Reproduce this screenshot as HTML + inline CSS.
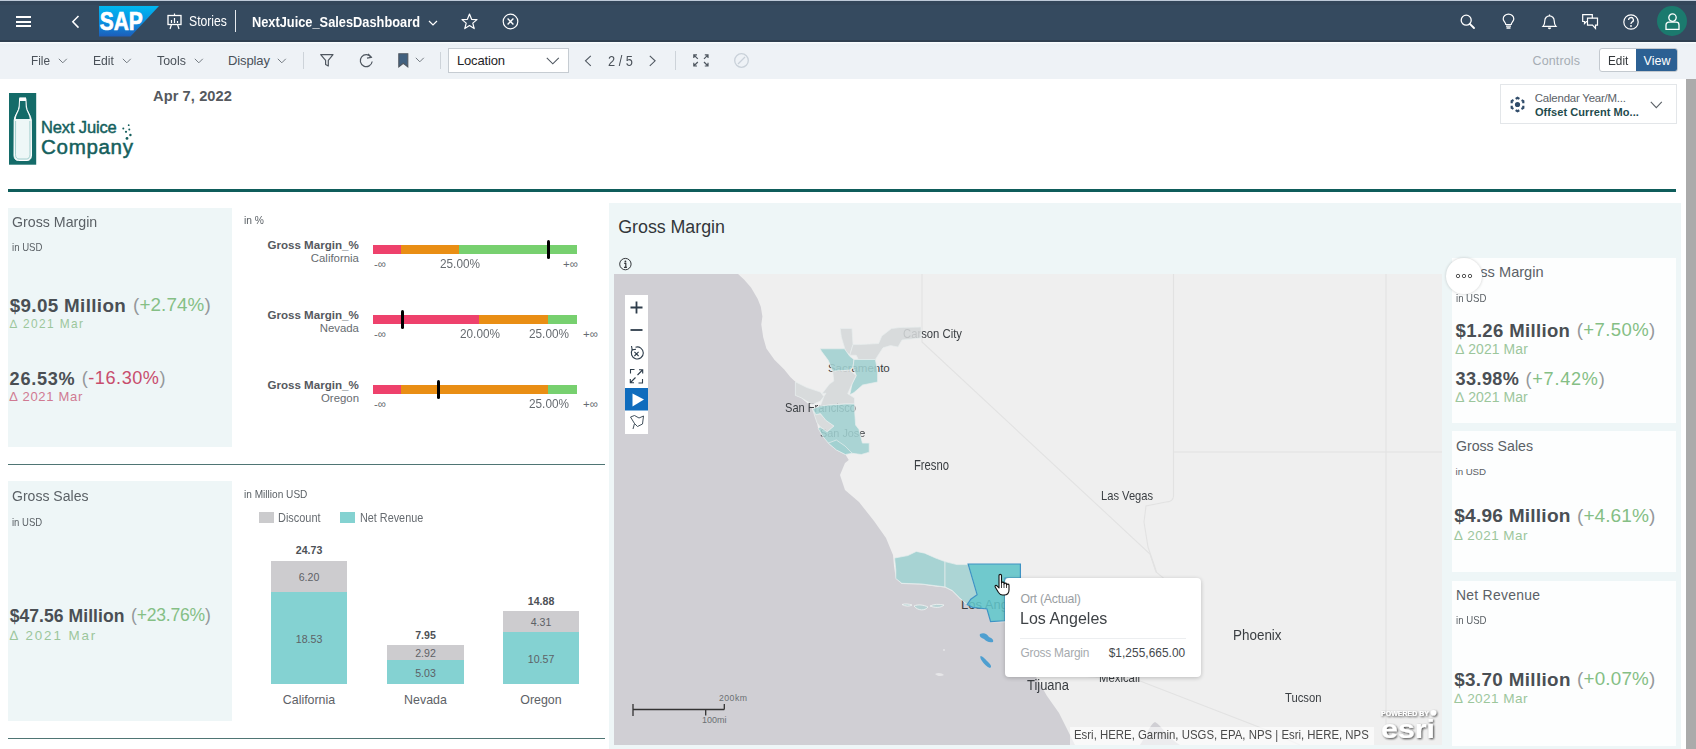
<!DOCTYPE html>
<html><head><meta charset="utf-8"><style>*{box-sizing:border-box;margin:0;padding:0}
html,body{width:1696px;height:749px;overflow:hidden;background:#fff;font-family:"Liberation Sans",sans-serif;color:#32363a}
.abs{position:absolute}
.tx{position:absolute;white-space:nowrap;line-height:1}
svg{position:absolute;overflow:visible}
</style></head><body>
<div class="abs" style="left:0;top:0;width:1696px;height:42px;background:#354a5f"></div><div class="abs" style="left:0;top:0;width:1696px;height:1px;background:#bdc9d8"></div><div class="abs" style="left:0;top:1px;width:1696px;height:4px;background:#33465a"></div><div class="abs" style="left:16px;top:16px;width:15px;height:2px;background:#fff"></div><div class="abs" style="left:16px;top:20.5px;width:15px;height:2px;background:#fff"></div><div class="abs" style="left:16px;top:25px;width:15px;height:2px;background:#fff"></div><svg style="left:71px;top:15px" width="10" height="14"><path d="M7.5 1 L1.8 6.8 L7.5 12.6" fill="none" stroke="#fff" stroke-width="1.5"/></svg><svg style="left:99px;top:6px" width="60" height="31"><defs><linearGradient id="sg" x1="0" y1="0" x2="0" y2="1"><stop offset="0" stop-color="#00b8f1"/><stop offset="0.55" stop-color="#0a8ee0"/><stop offset="1" stop-color="#1d5db9"/></linearGradient></defs><path d="M0 0 H60 L31.5 30.5 H0 Z" fill="url(#sg)"/><text x="0.8" y="24.2" font-family="Liberation Sans" font-weight="bold" font-size="26" fill="#fff" stroke="#fff" stroke-width="0.7" textLength="43" lengthAdjust="spacingAndGlyphs">SAP</text></svg><svg style="left:167px;top:13px" width="15" height="17"><rect x="1" y="2.5" width="13" height="9" fill="none" stroke="#fff" stroke-width="1.3"/><path d="M7.5 0.5 V2.5 M4.5 11.5 L3 16 M10.5 11.5 L12 16 M4.5 10 V7 M7.5 10 V5 M10.5 10 V8" stroke="#fff" stroke-width="1.2" fill="none"/></svg><div class="tx" style="left:189.0px;top:14.0px;font-size:14.49px;color:#fff;transform:scaleX(0.842);transform-origin:0 0;">Stories</div>
<div class="abs" style="left:235px;top:10px;width:1px;height:22px;background:#e6eaee"></div><div class="tx" style="left:252.0px;top:15.0px;font-size:14.49px;color:#fff;font-weight:bold;transform:scaleX(0.884);transform-origin:0 0;">NextJuice_SalesDashboard</div>
<svg style="left:428px;top:20px" width="10" height="7"><path d="M1 1 L5 5 L9 1" fill="none" stroke="#fff" stroke-width="1.2"/></svg><svg style="left:461px;top:13px" width="17" height="17"><path d="M8.5 1 L10.6 6.3 L16 6.6 L11.8 10.1 L13.2 15.6 L8.5 12.6 L3.8 15.6 L5.2 10.1 L1 6.6 L6.4 6.3 Z" fill="none" stroke="#fff" stroke-width="1.2" stroke-linejoin="round"/></svg><svg style="left:502px;top:13px" width="17" height="17"><circle cx="8.5" cy="8.5" r="7.3" fill="none" stroke="#fff" stroke-width="1.2"/><path d="M5.6 5.6 L11.4 11.4 M11.4 5.6 L5.6 11.4" stroke="#fff" stroke-width="1.4"/></svg><svg style="left:1460px;top:14px" width="16" height="16"><circle cx="6.2" cy="6.2" r="5" fill="none" stroke="#fff" stroke-width="1.3"/><path d="M9.8 9.8 L14 14" stroke="#fff" stroke-width="1.9" stroke-linecap="round"/></svg><svg style="left:1502px;top:14px" width="14" height="16"><path d="M3.8 10.5 C3.8 8.3 1.2 7.2 1.2 4.9 A5.3 4.8 0 0 1 11.8 4.9 C11.8 7.2 9.2 8.3 9.2 10.5 Z" fill="none" stroke="#fff" stroke-width="1.2"/><path d="M4 12.2 H9 M4.5 14 H8.5" stroke="#fff" stroke-width="1.3"/></svg><svg style="left:1542px;top:14px" width="15" height="16"><path d="M1 12.3 C2.5 10.8 2.8 9.5 2.8 6.8 A4.7 5 0 0 1 12.2 6.8 C12.2 9.5 12.5 10.8 14 12.3 Z" fill="none" stroke="#fff" stroke-width="1.2"/><path d="M5.8 13.5 A1.7 1.7 0 0 0 9.2 13.5 Z" fill="#fff"/><path d="M7.5 0.5 V2" stroke="#fff" stroke-width="1.2"/></svg><svg style="left:1582px;top:14px" width="17" height="16"><path d="M0.7 0.7 H10.3 V7.5 H4.5 L2.5 9.5 V7.5 H0.7 Z" fill="none" stroke="#fff" stroke-width="1.2"/><path d="M5.5 4.2 H15.5 V11.2 H13.5 V14.5 L10.5 11.2 H5.5 Z" fill="#354a5f" stroke="#fff" stroke-width="1.2"/></svg><svg style="left:1623px;top:14px" width="16" height="16"><circle cx="8" cy="8" r="7.2" fill="none" stroke="#fff" stroke-width="1.2"/><path d="M5.6 6 A2.4 2.4 0 1 1 8.8 8.2 C8.1 8.6 8 9 8 10" fill="none" stroke="#fff" stroke-width="1.3"/><circle cx="8" cy="12" r="0.9" fill="#fff"/></svg><div class="abs" style="left:1657px;top:6px;width:30px;height:30px;border-radius:50%;background:#1b7a6e"></div><svg style="left:1665px;top:13px" width="15" height="17"><circle cx="7.5" cy="4.6" r="3.7" fill="none" stroke="#fff" stroke-width="1.3"/><path d="M1 16.3 V12 A2.8 2.8 0 0 1 3.8 9.2 H11.2 A2.8 2.8 0 0 1 14 12 V16.3 Z" fill="none" stroke="#fff" stroke-width="1.3"/></svg><div class="abs" style="left:0;top:42px;width:1696px;height:37px;background:linear-gradient(#f8fbfc 0,#f8fbfc 1px,#ebf0f4 2px,#eef2f6 6px,#eef2f6)"></div><div class="abs" style="left:0;top:40px;width:1696px;height:2px;background:#2f3f4f"></div><div class="tx" style="left:31.0px;top:54.0px;font-size:13.04px;color:#4a5159;transform:scaleX(0.903);transform-origin:0 0;">File</div>
<div class="tx" style="left:93.0px;top:54.0px;font-size:13.04px;color:#4a5159;transform:scaleX(0.933);transform-origin:0 0;">Edit</div>
<div class="tx" style="left:157.0px;top:54.0px;font-size:13.04px;color:#4a5159;transform:scaleX(0.951);transform-origin:0 0;">Tools</div>
<div class="tx" style="left:228.0px;top:54.0px;font-size:13.04px;letter-spacing:-0.13px;color:#4a5159;">Display</div>
<svg style="left:58px;top:58px" width="10" height="6"><path d="M0.8 0.8 L4.8 4.8 L8.8 0.8" fill="none" stroke="#737a81" stroke-width="1"/></svg><svg style="left:122px;top:58px" width="10" height="6"><path d="M0.8 0.8 L4.8 4.8 L8.8 0.8" fill="none" stroke="#737a81" stroke-width="1"/></svg><svg style="left:194px;top:58px" width="10" height="6"><path d="M0.8 0.8 L4.8 4.8 L8.8 0.8" fill="none" stroke="#737a81" stroke-width="1"/></svg><svg style="left:277px;top:58px" width="10" height="6"><path d="M0.8 0.8 L4.8 4.8 L8.8 0.8" fill="none" stroke="#737a81" stroke-width="1"/></svg><div class="abs" style="left:303px;top:52px;width:1px;height:17px;background:#cdd3d9"></div><svg style="left:320px;top:54px" width="14" height="13"><path d="M0.7 0.7 H13 L8.3 6.3 V12 L5.6 10.4 V6.3 Z" fill="none" stroke="#4f5760" stroke-width="1.2" stroke-linejoin="round"/></svg><svg style="left:359px;top:53px" width="15" height="15"><path d="M12.2 4.2 A6 6 0 1 0 13.2 8.5" fill="none" stroke="#4f5760" stroke-width="1.2"/><path d="M9 0.8 L12.3 4.3 L8 5.2" fill="none" stroke="#4f5760" stroke-width="1.2"/></svg><svg style="left:398px;top:53px" width="11" height="15"><path d="M0.8 0.8 H9.8 V13.8 L5.3 10.3 L0.8 13.8 Z" fill="#41607f" stroke="#4f5760" stroke-width="1.1"/></svg><svg style="left:415px;top:57px" width="10" height="6"><path d="M0.8 0.8 L4.8 4.8 L8.8 0.8" fill="none" stroke="#737a81" stroke-width="1"/></svg><div class="abs" style="left:440px;top:52px;width:1px;height:17px;background:#cdd3d9"></div><div class="abs" style="left:448px;top:48px;width:121px;height:25px;background:#fff;border:1px solid #c6ccd2"></div><div class="tx" style="left:457.0px;top:54.0px;font-size:13.04px;letter-spacing:-0.19px;color:#1f2326;">Location</div>
<svg style="left:546px;top:57px" width="14" height="8"><path d="M0.8 0.8 L6.8 6.8 L12.8 0.8" fill="none" stroke="#4f5760" stroke-width="1.1"/></svg><svg style="left:584px;top:55px" width="8" height="12"><path d="M6.8 0.8 L1.5 5.8 L6.8 10.8" fill="none" stroke="#4f5760" stroke-width="1.1"/></svg><div class="tx" style="left:608.0px;top:54.0px;font-size:14.49px;color:#4a5159;transform:scaleX(0.887);transform-origin:0 0;">2 / 5</div>
<svg style="left:649px;top:55px" width="8" height="12"><path d="M0.8 0.8 L6.1 5.8 L0.8 10.8" fill="none" stroke="#4f5760" stroke-width="1.1"/></svg><div class="abs" style="left:675px;top:51px;width:1px;height:19px;background:#cdd3d9"></div><svg style="left:693px;top:54px" width="16" height="13"><path d="M0.8 4 V0.8 H4 M0.8 0.8 L4.8 4.8 M15 4 V0.8 H11.8 M15 0.8 L11 4.8 M0.8 8.8 V12 H4 M0.8 12 L4.8 8 M15 8.8 V12 H11.8 M15 12 L11 8" fill="none" stroke="#4f5760" stroke-width="1.2"/></svg><svg style="left:734px;top:53px" width="16" height="16"><circle cx="7.5" cy="7.5" r="6.8" fill="none" stroke="#c9d1d9" stroke-width="1.3"/><path d="M4 11 L11 4" stroke="#c9d1d9" stroke-width="1.3"/></svg><div class="tx" style="left:1532.5px;top:55.0px;font-size:12.46px;letter-spacing:0.15px;color:#a6adb4;">Controls</div>
<div class="abs" style="left:1599px;top:48px;width:79px;height:24px;border:1px solid #c3c9cf;border-radius:3px;background:#fff;overflow:hidden"><div class="abs" style="left:36px;top:-1px;width:43px;height:26px;background:#2c6093"></div></div><div class="tx" style="left:1607.7px;top:55.0px;font-size:12.46px;color:#32363a;transform:scaleX(0.944);transform-origin:0 0;">Edit</div>
<div class="tx" style="left:1643.5px;top:55.0px;font-size:12.46px;letter-spacing:0.07px;color:#fff;">View</div>
<div class="abs" style="left:1686px;top:79px;width:10px;height:670px;background:#ababab"></div><svg style="left:8.8px;top:92.9px" width="28" height="72"><rect x="0" y="0" width="27.2" height="71.7" fill="#146b69"/><path d="M10.6 5.5 L10.2 13 C10 18 5.5 22 5.2 27 L5 62 C5 66 7 67.5 9.5 67.5 L18 67.5 C20.5 67.5 22.5 66 22.5 62 L22.3 27 C22 22 17.5 18 17.3 13 L16.9 5.5 Z" fill="#eef7f7" stroke="#fff" stroke-width="1"/><path d="M11 8 L10.8 13.5 C10.5 18 7 21.5 6.8 26 L16 26 L20.7 26 C20.5 21.5 17 18 16.7 13.5 L16.5 8 Z" fill="#146b69"/><path d="M6.6 28 L6.5 61.5 C6.5 64.5 8 66 10 66 L17.5 66 C19.5 66 21 64.5 21 61.5 L20.9 28" fill="none" stroke="#6fb3b1" stroke-width="0.6"/><rect x="10.4" y="4.4" width="6.6" height="3.3" fill="#fff"/></svg><div class="tx" style="left:41.1px;top:120.0px;font-size:16.52px;letter-spacing:-0.17px;color:#155f5d;-webkit-text-stroke:0.45px #155f5d;">Next Juice</div>
<div class="tx" style="left:41.1px;top:137.0px;font-size:20.58px;letter-spacing:0.63px;color:#155f5d;-webkit-text-stroke:0.5px #155f5d;">Company</div>
<svg style="left:120px;top:122px" width="14" height="20"><circle cx="3.3" cy="6.5" r="1" fill="#155f5d"/><circle cx="8.7" cy="3.2" r="0.9" fill="#155f5d"/><circle cx="9.3" cy="7.6" r="1" fill="#155f5d"/><circle cx="6" cy="9.8" r="1.1" fill="#155f5d"/><circle cx="10.4" cy="13" r="1.2" fill="#155f5d"/><circle cx="7" cy="16.4" r="1.4" fill="#155f5d"/></svg><div class="tx" style="left:153.0px;top:89.0px;font-size:14.64px;letter-spacing:0.09px;color:#55595e;font-weight:bold;">Apr 7, 2022</div>
<div class="abs" style="left:1500px;top:84px;width:177px;height:40px;border:1px solid #e3e6e9;background:#fff"></div><svg style="left:1509px;top:96px" width="17" height="18"><polygon points="8.5,1.8 14.3,5.1 14.3,11.9 8.5,15.2 2.7,11.9 2.7,5.1" fill="none" stroke="#2f4b69" stroke-width="2.2" stroke-dasharray="4.2 2.5" stroke-dashoffset="2"/><circle cx="8.5" cy="8.5" r="2.6" fill="#2f4b69"/></svg><div class="tx" style="left:1534.8px;top:93.0px;font-size:11.45px;letter-spacing:-0.21px;color:#5b6167;">Calendar Year/M...</div>
<div class="tx" style="left:1535.0px;top:107.0px;font-size:11.01px;letter-spacing:0.06px;color:#1e4b4d;font-weight:bold;">Offset Current Mo...</div>
<svg style="left:1650px;top:101px" width="13" height="8"><path d="M0.8 0.8 L6.3 6.6 L11.8 0.8" fill="none" stroke="#5b6167" stroke-width="1.1"/></svg><div class="abs" style="left:8px;top:189px;width:1668px;height:3px;background:#0f5d5b"></div><div class="abs" style="left:8px;top:208px;width:224px;height:239px;background:#eef6f7"></div><div class="tx" style="left:11.7px;top:215.0px;font-size:14.78px;color:#5b6166;transform:scaleX(0.962);transform-origin:0 0;">Gross Margin</div>
<div class="tx" style="left:11.7px;top:243.0px;font-size:10.29px;color:#5b6166;transform:scaleX(0.935);transform-origin:0 0;">in USD</div>
<div class="tx" style="left:9.7px;top:297.0px;font-size:18.84px;letter-spacing:0.34px;color:#4a4f54;font-weight:bold;">$9.05 Million</div>
<div class="tx" style="left:133.0px;top:295.6px;font-size:18.84px;letter-spacing:0.11px;color:#94989b">(<span style="color:#85bf85">+2.74%</span>)</div>
<div class="tx" style="left:9.7px;top:319.0px;font-size:11.88px;letter-spacing:1.39px;color:#9cc69c;">∆ 2021 Mar</div>
<div class="tx" style="left:9.6px;top:370.0px;font-size:18.12px;letter-spacing:0.74px;color:#4a4f54;font-weight:bold;">26.53%</div>
<div class="tx" style="left:81.7px;top:369.3px;font-size:18.12px;letter-spacing:0.54px;color:#94989b">(<span style="color:#c84d6d">-16.30%</span>)</div>
<div class="tx" style="left:9.6px;top:390.0px;font-size:13.04px;letter-spacing:0.67px;color:#d07a92;">∆ 2021 Mar</div>
<div class="tx" style="left:244.0px;top:215.0px;font-size:11.59px;color:#5b6166;transform:scaleX(0.887);transform-origin:0 0;">in %</div>
<div class="tx" style="left:267.4px;top:239.0px;font-size:11.60px;color:#55595e;font-weight:bold;">Gross Margin_%</div>
<div class="tx" style="left:310.8px;top:253.0px;font-size:11.40px;color:#666b70;">California</div>
<div class="abs" style="left:373px;top:245px;width:28px;height:9px;background:#ee416c"></div><div class="abs" style="left:401px;top:245px;width:58px;height:9px;background:#e98e14"></div><div class="abs" style="left:459px;top:245px;width:118px;height:9px;background:#77d06f"></div><div class="abs" style="left:547.0px;top:240px;width:3px;height:19px;border-radius:1.5px;background:#000"></div><div class="tx" style="left:374.0px;top:259.0px;font-size:11.50px;color:#666b70;">-∞</div>
<div class="tx" style="left:440.0px;top:258.0px;font-size:12.32px;color:#666b70;transform:scaleX(0.957);transform-origin:0 0;">25.00%</div>
<div class="tx" style="left:563.0px;top:259.0px;font-size:11.50px;letter-spacing:0.05px;color:#666b70;">+∞</div>
<div class="tx" style="left:267.4px;top:309.0px;font-size:11.60px;color:#55595e;font-weight:bold;">Gross Margin_%</div>
<div class="tx" style="left:319.7px;top:323.0px;font-size:11.40px;color:#666b70;">Nevada</div>
<div class="abs" style="left:373px;top:315px;width:106px;height:9px;background:#ee416c"></div><div class="abs" style="left:479px;top:315px;width:69px;height:9px;background:#e98e14"></div><div class="abs" style="left:548px;top:315px;width:29px;height:9px;background:#77d06f"></div><div class="abs" style="left:401.0px;top:310px;width:3px;height:19px;border-radius:1.5px;background:#000"></div><div class="tx" style="left:374.0px;top:329.0px;font-size:11.50px;color:#666b70;">-∞</div>
<div class="tx" style="left:460.0px;top:328.0px;font-size:12.32px;color:#666b70;transform:scaleX(0.957);transform-origin:0 0;">20.00%</div>
<div class="tx" style="left:529.0px;top:328.0px;font-size:12.32px;color:#666b70;transform:scaleX(0.957);transform-origin:0 0;">25.00%</div>
<div class="tx" style="left:583.0px;top:329.0px;font-size:11.50px;letter-spacing:0.05px;color:#666b70;">+∞</div>
<div class="tx" style="left:267.4px;top:379.0px;font-size:11.60px;color:#55595e;font-weight:bold;">Gross Margin_%</div>
<div class="tx" style="left:321.0px;top:393.0px;font-size:11.40px;color:#666b70;">Oregon</div>
<div class="abs" style="left:373px;top:385px;width:28px;height:9px;background:#ee416c"></div><div class="abs" style="left:401px;top:385px;width:147px;height:9px;background:#e98e14"></div><div class="abs" style="left:548px;top:385px;width:29px;height:9px;background:#77d06f"></div><div class="abs" style="left:436.5px;top:380px;width:3px;height:19px;border-radius:1.5px;background:#000"></div><div class="tx" style="left:374.0px;top:399.0px;font-size:11.50px;color:#666b70;">-∞</div>
<div class="tx" style="left:529.0px;top:398.0px;font-size:12.32px;color:#666b70;transform:scaleX(0.957);transform-origin:0 0;">25.00%</div>
<div class="tx" style="left:583.0px;top:399.0px;font-size:11.50px;letter-spacing:0.05px;color:#666b70;">+∞</div>
<div class="abs" style="left:8px;top:464px;width:597px;height:1px;background:#4f7574"></div><div class="abs" style="left:8px;top:738px;width:597px;height:1px;background:#4f7574"></div><div class="abs" style="left:8px;top:481px;width:224px;height:240px;background:#eef6f7"></div><div class="tx" style="left:11.8px;top:489.0px;font-size:14.93px;color:#5b6166;transform:scaleX(0.941);transform-origin:0 0;">Gross Sales</div>
<div class="tx" style="left:11.8px;top:517.0px;font-size:11.30px;color:#5b6166;transform:scaleX(0.843);transform-origin:0 0;">in USD</div>
<div class="tx" style="left:9.7px;top:608.0px;font-size:17.54px;letter-spacing:0.06px;color:#4a4f54;font-weight:bold;">$47.56 Million</div>
<div class="tx" style="left:131.0px;top:606.7px;font-size:17.54px;letter-spacing:-0.20px;color:#94989b">(<span style="color:#85bf85">+23.76%</span>)</div>
<div class="tx" style="left:9.7px;top:629.0px;font-size:13.40px;letter-spacing:1.90px;color:#9cc69c;">∆ 2021 Mar</div>
<div class="tx" style="left:244.0px;top:489.0px;font-size:10.87px;color:#5b6166;transform:scaleX(0.930);transform-origin:0 0;">in Million USD</div>
<div class="abs" style="left:259px;top:512px;width:15px;height:11px;background:#cbcbcd"></div><div class="tx" style="left:278.4px;top:512.0px;font-size:12.03px;color:#666b70;transform:scaleX(0.910);transform-origin:0 0;">Discount</div>
<div class="abs" style="left:340px;top:512px;width:15px;height:11px;background:#84d2d1"></div><div class="tx" style="left:359.7px;top:512.0px;font-size:12.03px;color:#666b70;transform:scaleX(0.901);transform-origin:0 0;">Net Revenue</div>
<div class="abs" style="left:271px;top:560.7px;width:76px;height:31.299999999999955px;background:#cdcccf"></div><div class="abs" style="left:271px;top:592px;width:76px;height:91.5px;background:#84d2d2"></div><div class="tx" style="left:295.8px;top:545.0px;font-size:10.60px;color:#4d5156;font-weight:bold;">24.73</div>
<div class="tx" style="left:298.7px;top:572.0px;font-size:10.60px;color:#5d6166;">6.20</div>
<div class="tx" style="left:295.8px;top:634.0px;font-size:10.60px;color:#5d6166;">18.53</div>
<div class="tx" style="left:282.8px;top:694.0px;font-size:12.40px;color:#5d6166;">California</div>
<div class="abs" style="left:387px;top:645px;width:77px;height:15px;background:#cdcccf"></div><div class="abs" style="left:387px;top:660px;width:77px;height:23.5px;background:#84d2d2"></div><div class="tx" style="left:415.2px;top:630.0px;font-size:10.60px;color:#4d5156;font-weight:bold;">7.95</div>
<div class="tx" style="left:415.2px;top:648.0px;font-size:10.60px;color:#5d6166;">2.92</div>
<div class="tx" style="left:415.2px;top:668.0px;font-size:10.60px;color:#5d6166;">5.03</div>
<div class="tx" style="left:404.1px;top:694.0px;font-size:12.40px;color:#5d6166;">Nevada</div>
<div class="abs" style="left:503px;top:611px;width:76px;height:21px;background:#cdcccf"></div><div class="abs" style="left:503px;top:632px;width:76px;height:51.5px;background:#84d2d2"></div><div class="tx" style="left:527.8px;top:596.0px;font-size:10.60px;color:#4d5156;font-weight:bold;">14.88</div>
<div class="tx" style="left:530.7px;top:617.0px;font-size:10.60px;color:#5d6166;">4.31</div>
<div class="tx" style="left:527.8px;top:654.0px;font-size:10.60px;color:#5d6166;">10.57</div>
<div class="tx" style="left:520.3px;top:694.0px;font-size:12.40px;color:#5d6166;">Oregon</div>
<div class="abs" style="left:609px;top:203px;width:1072px;height:546px;background:#eef6f7"></div><div class="tx" style="left:618.3px;top:219.0px;font-size:17.83px;letter-spacing:-0.04px;color:#32363a;">Gross Margin</div>
<svg style="left:619px;top:258px" width="13" height="13"><circle cx="6.4" cy="6.1" r="5.7" fill="none" stroke="#32363a" stroke-width="1"/><circle cx="6.4" cy="3.5" r="0.9" fill="#32363a"/><path d="M5.2 5.3 H6.8 V9.2 M5 9.3 H7.9" fill="none" stroke="#32363a" stroke-width="1.2"/></svg><svg style="left:0;top:0" width="1696" height="749"><defs><clipPath id="mc"><rect x="614" y="274" width="828" height="471"/></clipPath></defs><g clip-path="url(#mc)"><rect x="614" y="274" width="828" height="471" fill="#efefef"/><path d="M614.0 273.0 L737.0 273.0 L744.0 279.6 L751.0 287.6 L757.6 298.8 L760.8 306.8 L762.4 316.4 L761.3 324.4 L763.2 337.3 L766.4 348.5 L774.4 359.7 L784.0 369.3 L790.5 377.3 L795.4 381.8 L795.4 395.4 L801.0 397.7 L809.0 404.5 L812.5 409.0 L814.7 415.9 L817.0 422.7 L818.1 428.3 L822.7 436.3 L828.3 443.1 L836.3 449.9 L845.4 454.5 L848.8 460.0 L845.0 463.0 L840.0 475.0 L845.0 490.0 L859.0 502.0 L874.0 521.0 L886.0 538.0 L893.0 555.0 L894.0 566.0 L895.8 578.5 L901.8 584.0 L921.0 584.6 L935.5 586.4 L945.0 587.6 L952.3 591.2 L959.5 598.4 L967.0 604.8 L972.6 607.6 L987.0 609.4 L990.6 622.2 L1005.0 622.2 L1015.0 650.0 L1030.0 676.0 L1036.0 677.0 L1047.0 696.0 L1059.0 713.0 L1070.0 735.0 L1075.0 745.0 L614.0 745.0 Z" fill="#d0cfd4"/><g fill="none" stroke="#e2e2e2" stroke-width="1.1"><path d="M922 273 V342 L1150 554 L1156 572 L1190 600"/><path d="M1173.5 273 V496 C1173.5 500 1170 502 1166 502 L1146 506 L1144 522 L1148 547 L1156.5 572"/><path d="M1173.5 452 H1442"/><path d="M1386 273 V740"/><path d="M1080 676 L1140 681 L1264 729 L1300 745"/></g></g></svg><div class="tx" style="left:903.0px;top:327.0px;font-size:13.04px;color:#3a3e42;transform:scaleX(0.866);transform-origin:0 0;">Carson City</div>
<div class="tx" style="left:827.9px;top:363.0px;font-size:11.59px;letter-spacing:-0.06px;color:#3a3e42;">Sacramento</div>
<div class="tx" style="left:784.6px;top:402.0px;font-size:12.32px;color:#3a3e42;transform:scaleX(0.901);transform-origin:0 0;">San Francisco</div>
<div class="tx" style="left:820.4px;top:428.0px;font-size:11.45px;color:#3a3e42;transform:scaleX(0.951);transform-origin:0 0;">San Jose</div>
<div class="tx" style="left:961.0px;top:598.0px;font-size:13.00px;color:#3a3e42;">Los Angeles</div>
<svg style="left:0;top:0" width="1696" height="749"><defs><clipPath id="mc2"><rect x="614" y="274" width="828" height="471"/></clipPath></defs><g clip-path="url(#mc2)"><g stroke="#e8eeee" stroke-width="0.7" fill-opacity="0.88"><path fill="#d5d8d9" d="M840.2 328.5 L852.0 328.5 L853.0 344.6 L849.8 355.2 L845.5 351.0 L841.3 337.0 Z"/><path fill="#d5d8d9" d="M853.0 344.6 L859.4 344.6 L878.6 343.5 L881.8 336.0 L891.5 328.5 L900.0 327.5 L921.0 327.0 L921.0 338.0 L902.0 340.0 L898.0 347.0 L890.4 345.6 L883.0 347.8 L875.4 359.5 L858.3 359.5 L856.2 355.2 L849.8 355.2 Z"/><path fill="#a0d0d0" d="M820.0 348.8 L844.5 348.8 L849.8 356.3 L854.0 359.5 L853.0 367.0 L849.8 370.2 L832.7 371.3 L828.4 360.6 L822.0 352.0 Z"/><path fill="#a0d0d0" d="M854.0 359.5 L875.4 359.5 L877.6 371.3 L877.6 382.0 L862.6 385.0 L854.0 392.6 L849.8 394.8 L852.0 384.0 L856.2 375.5 L853.0 367.0 Z"/><path fill="#d5d8d9" d="M832.7 371.3 L849.8 370.2 L856.2 375.5 L852.0 384.0 L847.7 393.7 L854.5 398.0 L854.5 404.0 L845.4 404.0 L830.0 405.0 L820.4 406.0 L823.8 396.6 L826.0 393.2 L822.0 393.7 L829.5 384.0 L833.8 381.0 Z"/><path fill="#d5d8d9" d="M795.4 381.8 L806.8 387.5 L820.4 392.0 L823.8 396.6 L820.4 401.1 L812.5 404.5 L801.0 397.7 L795.4 395.4 Z"/><path fill="#d5d8d9" d="M812.5 409.0 L815.9 414.7 L820.4 413.6 L826.0 420.4 L834.0 426.0 L827.2 431.8 L820.4 427.2 L817.0 422.7 L814.7 415.9 Z"/><path fill="#a0d0d0" d="M820.4 406.0 L830.0 405.0 L845.4 404.0 L854.5 404.0 L854.5 409.0 L855.6 425.0 L859.0 429.5 L862.4 443.1 L869.2 443.1 L869.2 452.2 L861.3 454.5 L852.2 453.3 L845.4 454.5 L836.3 449.9 L828.3 443.1 L822.7 436.3 L818.1 428.3 L820.4 427.2 L827.2 431.8 L834.0 426.0 L826.0 420.4 L820.4 413.6 L815.9 414.7 L812.5 409.0 Z"/><path fill="#a0d0d0" d="M828.3 443.1 L836.3 440.0 L845.0 446.0 L852.2 453.3 L845.4 454.5 L836.3 449.9 Z"/><path fill="#9dcfcf" d="M894.6 558.0 L907.8 555.6 L916.3 551.4 L924.7 553.2 L935.5 558.0 L945.0 561.6 L945.0 586.9 L935.5 585.7 L921.0 583.9 L901.8 583.3 L895.8 578.5 L895.8 570.0 Z"/><path fill="#a3d1d1" d="M945.0 561.6 L957.0 564.6 L968.1 564.6 L977.1 594.7 L970.8 599.2 L967.2 604.6 L959.5 597.7 L952.3 590.5 L945.0 586.9 Z"/><g fill="#b3d3d3" stroke="#f2f5f5" stroke-width="0.8"><path d="M902 604.5 C905 603.5 909 604 912 605 C910 606.5 905 606.5 902 604.5 Z"/><path d="M914 606 C918 604 924 605 928 607 C925 611 918 611 914 606 Z"/><path d="M930 606 C934 604 939 604 944 605 C941 608 935 608 930 606 Z"/></g></g><path fill="#5ec4c8" fill-opacity="0.88" stroke="#3e93c4" stroke-width="1.2" d="M968.1 564.0 L1020.4 564.0 L1020.4 578.0 L1005.0 578.0 L1005.0 620.8 L990.6 621.7 L987.0 609.0 L972.6 607.3 L967.2 604.6 L970.8 599.2 L977.1 594.7 Z"/><path fill="#4e9fd0" d="M980 634 C984 632 987 634 989 637 C992 638 994 640 993 642 C989 643 986 641 984 639 C981 638 979 636 980 634 Z"/><path fill="#4e9fd0" d="M980.5 656 C983 656 986 660 989 663 C991 665 992 667 990 668 C987 667 984 664 982 661 C980.5 659 980 657 980.5 656 Z"/><circle cx="944" cy="650" r="1" fill="#e6e6e8"/><path d="M935 674 C938 672 942 673 944 675 C941 677 937 676 935 674 Z" fill="#e6e6e8"/><path d="M1140 745 C1145 738 1150 724 1155 722 C1162 726 1168 738 1180 745 Z" fill="#d0cfd4"/></g></svg><div class="tx" style="left:914.0px;top:458.0px;font-size:14.49px;color:#3a3e42;transform:scaleX(0.776);transform-origin:0 0;">Fresno</div>
<div class="tx" style="left:1101.4px;top:489.0px;font-size:13.48px;color:#3a3e42;transform:scaleX(0.828);transform-origin:0 0;">Las Vegas</div>
<div class="tx" style="left:1233.0px;top:628.0px;font-size:14.49px;color:#3a3e42;transform:scaleX(0.928);transform-origin:0 0;">Phoenix</div>
<div class="tx" style="left:1285.0px;top:691.0px;font-size:13.04px;color:#3a3e42;transform:scaleX(0.865);transform-origin:0 0;">Tucson</div>
<div class="tx" style="left:1027.0px;top:678.0px;font-size:14.49px;color:#3a3e42;transform:scaleX(0.893);transform-origin:0 0;">Tijuana</div>
<div class="tx" style="left:1099.0px;top:671.0px;font-size:13.04px;color:#3a3e42;transform:scaleX(0.870);transform-origin:0 0;">Mexicali</div>
<div class="abs" style="left:625px;top:295px;width:23px;height:139px;background:#fff"></div><svg style="left:625px;top:295px" width="23" height="139"><g stroke="#2e3d4b" fill="none" stroke-width="1.8"><path d="M11.5 6.5 V18.5 M5.5 12.5 H17.5"/><path d="M5.5 35 H17.5"/></g><g stroke="#2e3d4b" fill="none" stroke-width="1.1"><path d="M7.3 54.6 A6 6 0 1 0 10.5 52.2"/><path d="M6.5 51 L7.2 54.8 L11 54.2"/><path d="M9.4 56.8 L13.6 61 M13.6 56.8 L9.4 61"/><path d="M5.5 78.5 V74.5 H9.5 M13.5 88 H17.5 V84"/><path d="M12.5 80 L17.5 75 M14 74.8 H17.7 V78.5 M10.5 82.5 L5.5 87.5 M5.3 84 V87.7 H9"/></g><rect x="0" y="93" width="23" height="22.5" fill="#0f6cbd"/><path d="M7.5 98.5 L19 104.5 L7.5 111.5 Z" fill="#fff"/><path d="M5.5 122 L9.5 120.5 L14 123 L18.5 121 L17.5 129 L12.5 131.5 L9.5 128.5 L5.5 122 M9.5 128.5 L8 134" fill="none" stroke="#2e3d4b" stroke-width="0.9"/></svg><svg style="left:0;top:0" width="1" height="1"><path d="M633 704 V716 M633 709.5 H724.3 M724.3 704 V709.5 M705.7 709.5 V715.5" stroke="#333" stroke-width="1.3" fill="none"/></svg><div class="tx" style="left:719.0px;top:694.0px;font-size:8.70px;letter-spacing:0.48px;color:#6b6f73;">200km</div>
<div class="tx" style="left:702.0px;top:716.0px;font-size:8.99px;letter-spacing:0.03px;color:#6b6f73;">100mi</div>
<div class="abs" style="left:1070px;top:727px;width:304px;height:18px;background:rgba(255,255,255,0.6)"></div><div class="tx" style="left:1074.0px;top:729.0px;font-size:12.32px;color:#4a4a4a;transform:scaleX(0.926);transform-origin:0 0;">Esri, HERE, Garmin, USGS, EPA, NPS | Esri, HERE, NPS</div>
<svg style="left:1378px;top:706px" width="62" height="38"><defs><filter id="esh" x="-20%" y="-20%" width="140%" height="140%"><feGaussianBlur in="SourceAlpha" stdDeviation="0.8"/><feOffset dx="0.6" dy="0.8"/><feComponentTransfer><feFuncA type="linear" slope="0.75"/></feComponentTransfer><feMerge><feMergeNode/><feMergeNode in="SourceGraphic"/></feMerge></filter></defs><g filter="url(#esh)"><text x="3" y="9.5" font-family="Liberation Sans" font-weight="bold" font-size="7" fill="#fff" textLength="48" lengthAdjust="spacingAndGlyphs">POWERED BY</text><circle cx="55.5" cy="6.8" r="2.8" fill="#fff"/><text x="3" y="32.3" font-family="Liberation Sans" font-weight="bold" font-size="26.5" fill="#fff" textLength="54" lengthAdjust="spacingAndGlyphs">esri</text></g></svg><div class="abs" style="left:1005px;top:578px;width:196px;height:99px;background:#fff;border-radius:4px;box-shadow:0 1px 4px rgba(0,0,0,0.22)"></div><div class="tx" style="left:1020.4px;top:593.0px;font-size:12.32px;letter-spacing:-0.23px;color:#9a9ea2;">Ort (Actual)</div>
<div class="tx" style="left:1020.4px;top:611.0px;font-size:16.96px;color:#3f4347;transform:scaleX(0.946);transform-origin:0 0;">Los Angeles</div>
<div class="abs" style="left:1020px;top:637.5px;width:166px;height:1px;background:#eceef0"></div><div class="tx" style="left:1020.4px;top:648.0px;font-size:11.88px;letter-spacing:-0.21px;color:#a6aaae;">Gross Margin</div>
<div class="tx" style="left:1108.7px;top:648.0px;font-size:11.88px;letter-spacing:0.05px;color:#44484c;">$1,255,665.00</div>
<svg style="left:994px;top:573px" width="20" height="24"><path d="M5 2.5 C5 1 7.5 1 7.5 2.5 V10 C7.5 8.8 10 8.8 10 10 V11 C10 9.8 12.5 9.8 12.5 11 V12 C12.5 10.8 15 10.8 15 12 V17 C15 20 13 22 10 22 H8.5 C6.5 22 5.5 21 4.5 19.5 L1.2 14 C0.5 12.8 2 11.8 3 12.8 L5 15 Z" fill="#fff" stroke="#111" stroke-width="1.1" stroke-linejoin="round"/><path d="M7.5 10 V15 M10 11 V15 M12.5 12 V15" stroke="#111" stroke-width="0.8"/></svg><div class="abs" style="left:1452px;top:258px;width:224px;height:165px;background:#fdfefe"></div><div class="abs" style="left:1452px;top:431px;width:224px;height:141px;background:#fdfefe"></div><div class="abs" style="left:1452px;top:581px;width:224px;height:165px;background:#fdfefe"></div><div class="tx" style="left:1456.0px;top:265.0px;font-size:14.60px;color:#5b6166;">Gross Margin</div>
<div class="tx" style="left:1455.6px;top:294.0px;font-size:10.20px;color:#5b6166;transform:scaleX(0.941);transform-origin:0 0;">in USD</div>
<div class="tx" style="left:1455.6px;top:322.0px;font-size:18.55px;letter-spacing:0.34px;color:#4a4f54;font-weight:bold;">$1.26 Million</div>
<div class="tx" style="left:1576.8px;top:321.0px;font-size:18.55px;letter-spacing:0.38px;color:#94989b">(<span style="color:#85bf85">+7.50%</span>)</div>
<div class="tx" style="left:1455.6px;top:343.0px;font-size:13.91px;letter-spacing:0.12px;color:#9cc69c;">∆ 2021 Mar</div>
<div class="tx" style="left:1455.6px;top:370.0px;font-size:18.12px;letter-spacing:0.38px;color:#4a4f54;font-weight:bold;">33.98%</div>
<div class="tx" style="left:1525.5px;top:369.5px;font-size:18.12px;letter-spacing:0.74px;color:#94989b">(<span style="color:#85bf85">+7.42%</span>)</div>
<div class="tx" style="left:1455.6px;top:390.0px;font-size:14.06px;letter-spacing:0.04px;color:#9cc69c;">∆ 2021 Mar</div>
<div class="tx" style="left:1456.0px;top:439.0px;font-size:14.20px;letter-spacing:-0.03px;color:#5b6166;">Gross Sales</div>
<div class="tx" style="left:1455.6px;top:467.0px;font-size:9.71px;letter-spacing:-0.07px;color:#5b6166;">in USD</div>
<div class="tx" style="left:1454.2px;top:506.0px;font-size:19.13px;letter-spacing:0.22px;color:#4a4f54;font-weight:bold;">$4.96 Million</div>
<div class="tx" style="left:1577.0px;top:505.9px;font-size:19.13px;letter-spacing:0.03px;color:#94989b">(<span style="color:#85bf85">+4.61%</span>)</div>
<div class="tx" style="left:1454.2px;top:529.0px;font-size:13.48px;letter-spacing:0.50px;color:#9cc69c;">∆ 2021 Mar</div>
<div class="tx" style="left:1456.0px;top:589.0px;font-size:13.91px;letter-spacing:0.28px;color:#5b6166;">Net Revenue</div>
<div class="tx" style="left:1456.0px;top:616.0px;font-size:10.14px;color:#5b6166;transform:scaleX(0.952);transform-origin:0 0;">in USD</div>
<div class="tx" style="left:1454.2px;top:671.0px;font-size:18.84px;letter-spacing:0.36px;color:#4a4f54;font-weight:bold;">$3.70 Million</div>
<div class="tx" style="left:1577.0px;top:670.0px;font-size:18.84px;letter-spacing:0.20px;color:#94989b">(<span style="color:#85bf85">+0.07%</span>)</div>
<div class="tx" style="left:1454.2px;top:692.0px;font-size:13.62px;letter-spacing:0.42px;color:#9cc69c;">∆ 2021 Mar</div>
<div class="abs" style="left:1446px;top:258px;width:36px;height:36px;border-radius:50%;background:#fff;box-shadow:0 0 3px rgba(0,0,0,0.2)"></div><svg style="left:1455px;top:273px" width="18" height="6"><g fill="none" stroke="#555" stroke-width="1"><circle cx="3" cy="3" r="1.7"/><circle cx="9" cy="3" r="1.7"/><circle cx="15" cy="3" r="1.7"/></g></svg></body></html>
